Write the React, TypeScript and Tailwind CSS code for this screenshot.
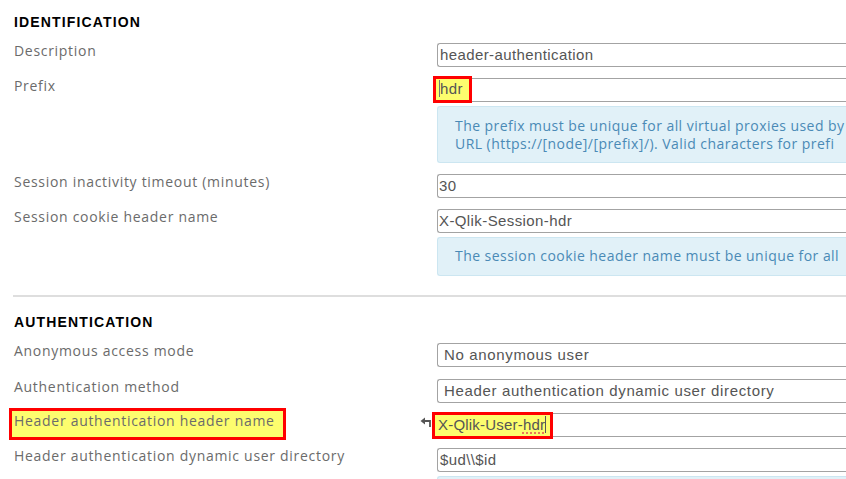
import React from "react";

const labelCls =
  "w-[437px] shrink-0 pl-[14px] mt-[-2px] h-[20px] leading-[20px] text-[14px] tracking-[0.7px] text-[#6b6b6b] [font-family:'Open_Sans',sans-serif] whitespace-nowrap";
const inputCls =
  "relative flex-1 h-[24px] border border-[#a3a3a3] rounded-l-[3px] border-r-0 bg-white text-[15px] leading-[22px] tracking-[0.4px] text-[#555] [font-family:'Liberation_Sans',Arial,sans-serif] whitespace-nowrap overflow-visible";

function Row({
  label,
  children,
  mt = "mt-[11px]",
}: {
  label: React.ReactNode;
  children: React.ReactNode;
  mt?: string;
}) {
  return (
    <div className={`flex ${mt}`}>
      <div className={labelCls}>{label}</div>
      {children}
    </div>
  );
}

function Heading({ children }: { children: React.ReactNode }) {
  return (
    <div className="pl-[14px] h-[20px] leading-[20px] text-[14px] font-bold tracking-[1.15px] text-black [font-family:'Liberation_Sans',Arial,sans-serif]">
      {children}
    </div>
  );
}

function Info({ children, cls }: { children: React.ReactNode; cls: string }) {
  return (
    <div className="flex mt-[4px]">
      <div className="w-[437px] shrink-0" />
      <div
        className={`flex-1 bg-[#e1f1f8] border border-[#cce6f1] border-r-0 rounded-l-[3px] pl-[17px] text-[14px] leading-[18px] tracking-[0.45px] text-[#4a8ab6] [font-family:'Open_Sans',sans-serif] whitespace-nowrap overflow-hidden ${cls}`}
      >
        {children}
      </div>
    </div>
  );
}

export default function App() {
  return (
    <div className="w-[846px] h-[479px] overflow-hidden bg-white relative">
      <div className="pt-[12px]">
        <Heading>IDENTIFICATION</Heading>
        <Row label="Description">
          <div className={`${inputCls} pl-[2px]`}>header-authentication</div>
        </Row>
        <Row label="Prefix">
          <div className={`${inputCls} pl-[2px]`}>
            <div className="absolute left-[-5px] top-[-3px] w-[39px] h-[27px] border-[3px] border-[#ff0000] bg-[#fdfd6e] pl-[3px] leading-[20px]">
              <span className="border-l border-[#777]">hdr</span>
            </div>
          </div>
        </Row>
        <Info cls="h-[57px] pt-[10px]">
          <div>The prefix must be unique for all virtual proxies used by</div>
          <div>URL (https://[node]/[prefix]/). Valid characters for prefi</div>
        </Info>
        <Row label="Session inactivity timeout (minutes)">
          <div className={`${inputCls} pl-[1px]`}>30</div>
        </Row>
        <Row label="Session cookie header name">
          <div className={`${inputCls} pl-[1px]`}>X-Qlik-Session-hdr</div>
        </Row>
        <Info cls="h-[39px] pt-[9px]">
          <div>The session cookie header name must be unique for all</div>
        </Info>
        <div className="ml-[13px] mt-[19px] h-[2px] bg-[#dedede]" />
        <div className="mt-[15px]">
          <Heading>AUTHENTICATION</Heading>
        </div>
        <Row label="Anonymous access mode">
          <div className={`${inputCls} pl-[6px] tracking-[0.65px]`}>No anonymous user</div>
        </Row>
        <Row label="Authentication method" mt="mt-[12px]">
          <div className={`${inputCls} pl-[6px] tracking-[0.65px]`}>
            Header authentication dynamic user directory
          </div>
        </Row>
        <Row
          mt="mt-[10px]"
          label={
            <span className="relative inline-block">
              <span className="absolute left-[-5px] top-[-3px] w-[277px] h-[32px] border-[3px] border-[#ff0000] bg-[#fdfd6e]" />
              <span className="relative">Header authentication header name</span>
            </span>
          }
        >
          <div className={`${inputCls} pl-[2px]`}>
            <svg
              className="absolute left-[-18px] top-[3px]"
              width="12"
              height="11"
              viewBox="0 0 12 11"
            >
              <path d="M0.5 4 L5 0.5 V7.5 Z" fill="#555" />
              <path d="M4 4 H10 V10" stroke="#555" strokeWidth="1.8" fill="none" />
            </svg>
            <div className="absolute left-[-6px] top-[-2px] w-[121px] h-[27px] border-[3px] border-[#ff0000] bg-[#fdfd6e] pl-[3px] leading-[20px] tracking-[0.2px]">
              <span>X-Qlik-User-</span>
              <span className="underline decoration-dotted decoration-[#e05050] underline-offset-[3px] border-r border-[#555]">
                hdr
              </span>
            </div>
          </div>
        </Row>
        <Row label="Header authentication dynamic user directory">
          <div className={`${inputCls} pl-[2px]`}>$ud\\$id</div>
        </Row>
        <Info cls="h-[40px]">
          <div> </div>
        </Info>
      </div>
    </div>
  );
}
